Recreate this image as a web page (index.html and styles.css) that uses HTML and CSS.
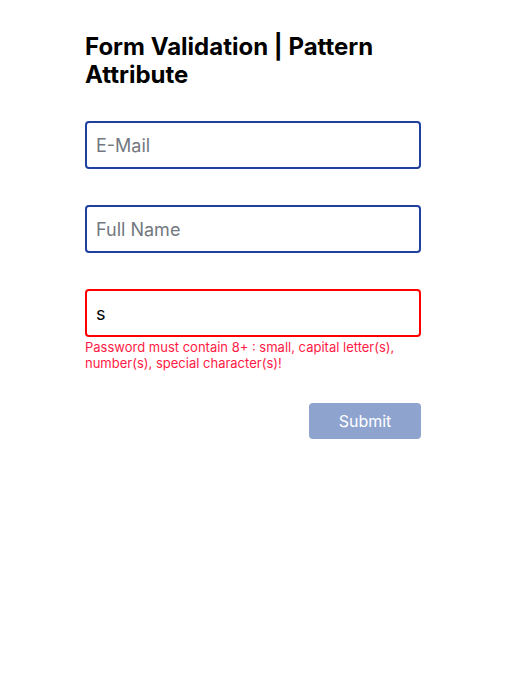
FILE: index.html
```html
<!DOCTYPE html>
<html>
    <head>
        <title>Form Validation | Pattern Attribute</title>
        <link rel="stylesheet" href="styles.css">
    </head>
    <body>
        <div class="page">
            <h1 class="title">Form Validation | Pattern Attribute</h1>
            <form class="form" onsubmit="return false">
                <div class="field">
                    <input class="input" type="email" placeholder="E-Mail">
                </div>
                <div class="field">
                    <input class="input" type="text" placeholder="Full Name">
                </div>
                <div class="field">
                    <input class="input invalid" type="text" value="s">
                    <div class="error">Password must contain 8+ : small, capital letter(s), number(s), special character(s)!</div>
                </div>
                <div class="actions">
                    <button class="submit" type="submit">Submit</button>
                </div>
            </form>
        </div>
    </body>
</html>
```

FILE: styles.css
```css
body {
    margin: 0;
    font-family: Inter, "Liberation Sans", sans-serif;
    background-color: white;
    color: black;
}
.page {
    width: 336px;
    margin-left: 85px;
    padding-top: 33px;
}
.title {
    margin: 0 0 33px 0;
    font-size: 24px;
    font-weight: 700;
    line-height: 1.15;
}
.form {
    display: flex;
    flex-direction: column;
    gap: 36px;
}
.field {
    display: flex;
    flex-direction: column;
}
.input {
    box-sizing: border-box;
    width: 100%;
    height: 48px;
    margin: 0;
    padding: 0 9px;
    border: 2px solid #1e40a0;
    border-radius: 4px;
    font-family: inherit;
    font-size: 18px;
    color: black;
    outline: none;
}
.input::placeholder {
    color: #737880;
}
.invalid {
    border-color: #ff0000;
}
.error {
    margin-top: 2px;
    font-size: 13px;
    color: #ff1a45;
}
.actions {
    display: flex;
    justify-content: flex-end;
    margin-top: -4px;
}
.submit {
    width: 112px;
    height: 36px;
    border: none;
    border-radius: 4px;
    background-color: #8fa3cf;
    color: white;
    font-family: inherit;
    font-size: 16px;
    cursor: pointer;
}
```
